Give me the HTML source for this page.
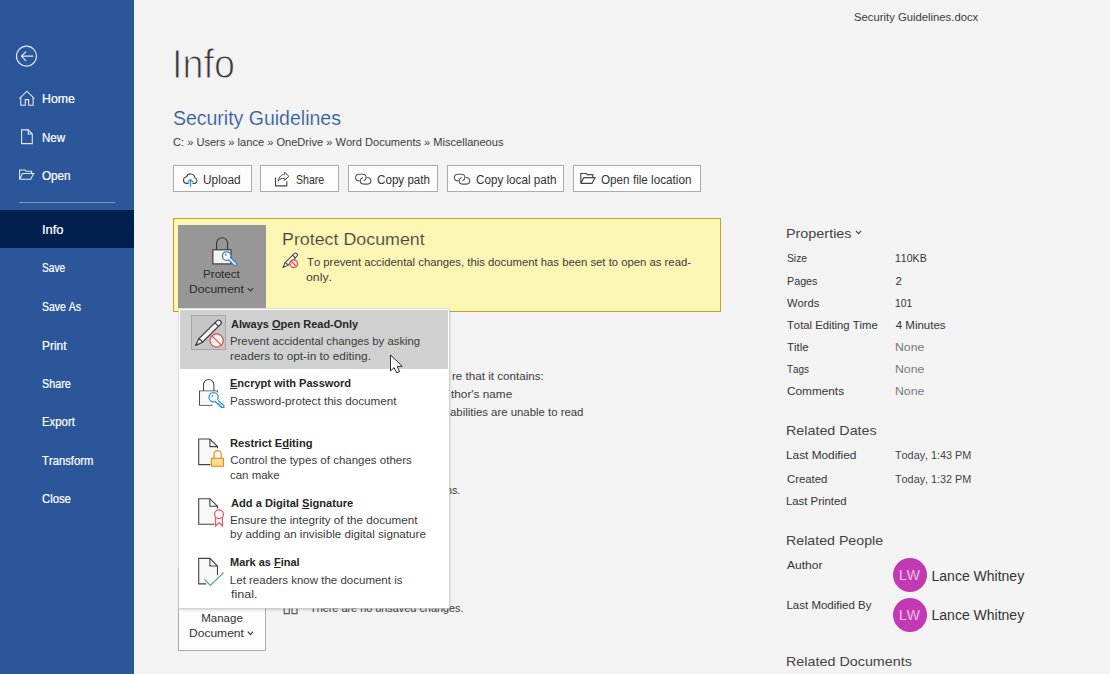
<!DOCTYPE html>
<html><head><meta charset="utf-8"><title>Info</title>
<style>
html,body{margin:0;padding:0;}
body{width:1110px;height:674px;overflow:hidden;background:#f3f3f3;position:relative;font-family:"Liberation Sans",sans-serif;}
.t{position:absolute;white-space:nowrap;transform-origin:0 0;font-kerning:none;}
.b{position:absolute;box-sizing:border-box;}
svg{position:absolute;overflow:visible;}
u{text-decoration:underline;text-underline-offset:1px;}
</style></head><body>
<div class="b" style="left:0px;top:0px;width:134.3px;height:674px;background:#2b579a;"></div>
<div class="b" style="left:0px;top:210px;width:134.3px;height:38px;background:#002050;"></div>
<div class="b" style="left:19px;top:202px;width:96px;height:1px;background:#7c97c4;"></div>
<span class="t" style="left:41.69px;top:89.00px;font-size:12px;line-height:20px;color:#ffffff;transform:scaleX(1.0265);-webkit-text-stroke:0.22px #fff;">Home</span>
<span class="t" style="left:41.75px;top:128.00px;font-size:12px;line-height:20px;color:#ffffff;transform:scaleX(0.9631);-webkit-text-stroke:0.22px #fff;">New</span>
<span class="t" style="left:42.15px;top:166.00px;font-size:12px;line-height:20px;color:#ffffff;transform:scaleX(0.9747);-webkit-text-stroke:0.22px #fff;">Open</span>
<span class="t" style="left:41.51px;top:220.00px;font-size:12px;line-height:20px;color:#ffffff;transform:scaleX(1.0758);-webkit-text-stroke:0.22px #fff;">Info</span>
<span class="t" style="left:42.24px;top:258.00px;font-size:12px;line-height:20px;color:#ffffff;transform:scaleX(0.8450);-webkit-text-stroke:0.22px #fff;">Save</span>
<span class="t" style="left:42.22px;top:297.00px;font-size:12px;line-height:20px;color:#ffffff;transform:scaleX(0.8739);-webkit-text-stroke:0.22px #fff;">Save As</span>
<span class="t" style="left:41.72px;top:336.00px;font-size:12px;line-height:20px;color:#ffffff;transform:scaleX(0.9915);-webkit-text-stroke:0.22px #fff;">Print</span>
<span class="t" style="left:42.21px;top:374.00px;font-size:12px;line-height:20px;color:#ffffff;transform:scaleX(0.8984);-webkit-text-stroke:0.22px #fff;">Share</span>
<span class="t" style="left:41.77px;top:412.00px;font-size:12px;line-height:20px;color:#ffffff;transform:scaleX(0.9462);-webkit-text-stroke:0.22px #fff;">Export</span>
<span class="t" style="left:42.45px;top:451.00px;font-size:12px;line-height:20px;color:#ffffff;transform:scaleX(0.9382);-webkit-text-stroke:0.22px #fff;">Transform</span>
<span class="t" style="left:42.13px;top:489.00px;font-size:12px;line-height:20px;color:#ffffff;transform:scaleX(0.9412);-webkit-text-stroke:0.22px #fff;">Close</span>
<span class="t" style="left:853.69px;top:7.00px;font-size:11px;line-height:20px;color:#3b3b3b;transform:scaleX(1.0262);">Security Guidelines.docx</span>
<span class="t" style="left:171.92px;top:36.00px;font-size:40px;line-height:56px;color:#383838;transform:scaleX(0.9422);-webkit-text-stroke:1.05px #f3f3f3;">Info</span>
<span class="t" style="left:172.91px;top:104.50px;font-size:19.5px;line-height:27px;color:#2b579a;-webkit-text-stroke:0.2px #f3f3f3;">Security Guidelines</span>
<span class="t" style="left:173.24px;top:132.00px;font-size:11px;line-height:20px;color:#3b3b3b;transform:scaleX(1.0066);">C: » Users » lance » OneDrive » Word Documents » Miscellaneous</span>
<div class="b" style="left:173px;top:165px;width:79px;height:27px;background:#fdfdfd;border:1px solid #ababab;"></div>
<div class="b" style="left:260px;top:165px;width:79px;height:27px;background:#fdfdfd;border:1px solid #ababab;"></div>
<div class="b" style="left:348px;top:165px;width:90px;height:27px;background:#fdfdfd;border:1px solid #ababab;"></div>
<div class="b" style="left:447px;top:165px;width:117px;height:27px;background:#fdfdfd;border:1px solid #ababab;"></div>
<div class="b" style="left:573px;top:165px;width:128px;height:27px;background:#fdfdfd;border:1px solid #ababab;"></div>
<span class="t" style="left:203.08px;top:170.00px;font-size:12px;line-height:20px;color:#333;transform:scaleX(0.9910);">Upload</span>
<span class="t" style="left:296.02px;top:170.00px;font-size:12px;line-height:20px;color:#333;transform:scaleX(0.8823);">Share</span>
<span class="t" style="left:376.71px;top:170.00px;font-size:12px;line-height:20px;color:#333;transform:scaleX(0.9697);">Copy path</span>
<span class="t" style="left:475.61px;top:170.00px;font-size:12px;line-height:20px;color:#333;transform:scaleX(0.9738);">Copy local path</span>
<span class="t" style="left:601.45px;top:170.00px;font-size:12px;line-height:20px;color:#333;transform:scaleX(0.9751);">Open file location</span>
<div class="b" style="left:173px;top:218px;width:548px;height:94px;background:#fbf6b4;border:1px solid #c5a021;"></div>
<div class="b" style="left:178px;top:225px;width:88px;height:82.6px;background:#979797;"></div>
<span class="t" style="left:203.45px;top:264.00px;font-size:11.5px;line-height:20px;color:#2b2b2b;transform:scaleX(1.0112);">Protect</span>
<span class="t" style="left:189.01px;top:279.00px;font-size:11.5px;line-height:20px;color:#2b2b2b;transform:scaleX(1.0470);">Document</span>
<span class="t" style="left:281.74px;top:228.00px;font-size:17px;line-height:23px;color:#444;transform:scaleX(1.0488);-webkit-text-stroke:0.15px #fbf6b4;">Protect Document</span>
<span class="t" style="left:306.55px;top:252.00px;font-size:11.5px;line-height:20px;color:#3b3b3b;transform:scaleX(0.9830);">To prevent accidental changes, this document has been set to open as read-</span>
<span class="t" style="left:306.28px;top:267.00px;font-size:11.5px;line-height:20px;color:#3b3b3b;transform:scaleX(1.0721);">only.</span>
<span class="t" style="left:452.23px;top:366.00px;font-size:11.5px;line-height:20px;color:#3b3b3b;transform:scaleX(1.0117);">re that it contains:</span>
<span class="t" style="left:451.32px;top:384.00px;font-size:11.5px;line-height:20px;color:#3b3b3b;transform:scaleX(1.0248);">thor&#x27;s name</span>
<span class="t" style="left:450.32px;top:402.00px;font-size:11.5px;line-height:20px;color:#3b3b3b;transform:scaleX(0.9890);">abilities are unable to read</span>
<span class="t" style="left:445.79px;top:480.00px;font-size:11.5px;line-height:20px;color:#3b3b3b;transform:scaleX(0.9315);">ns.</span>
<span class="t" style="left:309.66px;top:598.00px;font-size:11.5px;line-height:20px;color:#3b3b3b;transform:scaleX(0.9455);">There are no unsaved changes.</span>
<svg style="left:0;top:0" width="1110" height="674" viewBox="0 0 1110 674" fill="none"><path d="M284.2 604V613.6H289.3V604M292 604V613.6H297V604" stroke="#555" stroke-width="1.1" stroke-linejoin="miter" stroke-linecap="butt"/></svg>
<div class="b" style="left:178px;top:568px;width:88px;height:83px;background:#fdfdfd;border:1px solid #ababab;"></div>
<span class="t" style="left:-0.94px;top:608.00px;font-size:11.5px;line-height:20px;color:#333;left:178px;width:88px;text-align:center;">Manage</span>
<span class="t" style="left:189.01px;top:623.00px;font-size:11.5px;line-height:20px;color:#333;transform:scaleX(1.0470);">Document</span>
<span class="t" style="left:786.22px;top:223.50px;font-size:13.5px;line-height:20px;color:#444;transform:scaleX(1.0645);">Properties</span>
<span class="t" style="left:786.93px;top:248.00px;font-size:11.5px;line-height:20px;color:#333;transform:scaleX(0.8951);">Size</span>
<span class="t" style="left:895.20px;top:248.00px;font-size:11.5px;line-height:20px;color:#333;transform:scaleX(0.9169);">110KB</span>
<span class="t" style="left:786.52px;top:271.00px;font-size:11.5px;line-height:20px;color:#333;transform:scaleX(0.9344);">Pages</span>
<span class="t" style="left:895.42px;top:271.00px;font-size:11.5px;line-height:20px;color:#333;">2</span>
<span class="t" style="left:787.35px;top:293.00px;font-size:11.5px;line-height:20px;color:#333;transform:scaleX(0.9738);">Words</span>
<span class="t" style="left:895.21px;top:293.00px;font-size:11.5px;line-height:20px;color:#333;transform:scaleX(0.9014);">101</span>
<span class="t" style="left:787.15px;top:315.00px;font-size:11.5px;line-height:20px;color:#333;transform:scaleX(0.9782);">Total Editing Time</span>
<span class="t" style="left:895.74px;top:315.00px;font-size:11.5px;line-height:20px;color:#333;">4 Minutes</span>
<span class="t" style="left:787.14px;top:337.00px;font-size:11.5px;line-height:20px;color:#333;transform:scaleX(0.9973);">Title</span>
<span class="t" style="left:894.99px;top:337.00px;font-size:11.5px;line-height:20px;color:#7a7a7a;transform:scaleX(1.0677);">None</span>
<span class="t" style="left:787.18px;top:359.00px;font-size:11.5px;line-height:20px;color:#333;transform:scaleX(0.8597);">Tags</span>
<span class="t" style="left:894.99px;top:359.00px;font-size:11.5px;line-height:20px;color:#7a7a7a;transform:scaleX(1.0677);">None</span>
<span class="t" style="left:786.80px;top:381.00px;font-size:11.5px;line-height:20px;color:#333;transform:scaleX(1.0257);">Comments</span>
<span class="t" style="left:894.99px;top:381.00px;font-size:11.5px;line-height:20px;color:#7a7a7a;transform:scaleX(1.0677);">None</span>
<span class="t" style="left:786.23px;top:420.50px;font-size:13.5px;line-height:20px;color:#444;transform:scaleX(1.0601);">Related Dates</span>
<span class="t" style="left:786.43px;top:445.00px;font-size:11.5px;line-height:20px;color:#333;transform:scaleX(1.0283);">Last Modified</span>
<span class="t" style="left:895.06px;top:445.00px;font-size:11.5px;line-height:20px;color:#444;transform:scaleX(0.9403);">Today, 1:43 PM</span>
<span class="t" style="left:786.83px;top:469.00px;font-size:11.5px;line-height:20px;color:#333;transform:scaleX(0.9826);">Created</span>
<span class="t" style="left:895.06px;top:469.00px;font-size:11.5px;line-height:20px;color:#444;transform:scaleX(0.9403);">Today, 1:32 PM</span>
<span class="t" style="left:786.47px;top:491.00px;font-size:11.5px;line-height:20px;color:#333;transform:scaleX(0.9869);">Last Printed</span>
<span class="t" style="left:786.24px;top:530.50px;font-size:13.5px;line-height:20px;color:#444;transform:scaleX(1.0518);">Related People</span>
<span class="t" style="left:787.38px;top:555.00px;font-size:11.5px;line-height:20px;color:#333;transform:scaleX(1.0455);">Author</span>
<span class="t" style="left:786.46px;top:595.00px;font-size:11.5px;line-height:20px;color:#333;">Last Modified By</span>
<div class="b" style="left:893px;top:557.5999999999999px;width:34.2px;height:34.2px;background:#c239b3;border-radius:50%;"></div>
<span class="t" style="left:898.76px;top:564.00px;font-size:15.5px;line-height:21px;color:#fff;transform:scaleX(0.8985);-webkit-text-stroke:0.4px #c239b3;">LW</span>
<span class="t" style="left:931.55px;top:566.00px;font-size:14px;line-height:20px;color:#333;">Lance Whitney</span>
<div class="b" style="left:893px;top:598.0px;width:34.2px;height:34.2px;background:#c239b3;border-radius:50%;"></div>
<span class="t" style="left:898.76px;top:604.00px;font-size:15.5px;line-height:21px;color:#fff;transform:scaleX(0.8985);-webkit-text-stroke:0.4px #c239b3;">LW</span>
<span class="t" style="left:931.55px;top:605.00px;font-size:14px;line-height:20px;color:#333;">Lance Whitney</span>
<span class="t" style="left:786.22px;top:651.50px;font-size:13.5px;line-height:20px;color:#444;transform:scaleX(1.0619);">Related Documents</span>
<div class="b" style="left:179px;top:308.5px;width:270.2px;height:299.8px;background:#ffffff;box-shadow:0 0 0 0.6px #cfcfcf, 1px 1.5px 2.5px rgba(0,0,0,0.17);"></div>
<div class="b" style="left:180px;top:309.8px;width:267.8px;height:58.8px;background:#d0d0d0;"></div>
<div class="b" style="left:191px;top:315px;width:35px;height:34.8px;background:#c6c6c6;border:1px solid #a6a6a6;"></div>
<span class="t" style="left:230.53px;top:314.00px;font-size:11.5px;line-height:20px;color:#262626;font-weight:bold;transform:scaleX(0.9572);">Always <u>O</u>pen Read-Only</span>
<span class="t" style="left:229.87px;top:331.00px;font-size:11.5px;line-height:20px;color:#3b3b3b;transform:scaleX(0.9850);">Prevent accidental changes by asking</span>
<span class="t" style="left:230.01px;top:346.00px;font-size:11.5px;line-height:20px;color:#3b3b3b;transform:scaleX(1.0304);">readers to opt-in to editing.</span>
<span class="t" style="left:230.06px;top:373.00px;font-size:11.5px;line-height:20px;color:#262626;font-weight:bold;transform:scaleX(0.9568);"><u>E</u>ncrypt with Password</span>
<span class="t" style="left:229.84px;top:391.00px;font-size:11.5px;line-height:20px;color:#3b3b3b;transform:scaleX(1.0132);">Password-protect this document</span>
<span class="t" style="left:230.05px;top:433.00px;font-size:11.5px;line-height:20px;color:#262626;font-weight:bold;transform:scaleX(0.9719);">Restrict E<u>d</u>iting</span>
<span class="t" style="left:230.22px;top:450.00px;font-size:11.5px;line-height:20px;color:#3b3b3b;">Control the types of changes others</span>
<span class="t" style="left:230.31px;top:465.00px;font-size:11.5px;line-height:20px;color:#3b3b3b;transform:scaleX(0.9968);">can make</span>
<span class="t" style="left:230.52px;top:493.00px;font-size:11.5px;line-height:20px;color:#262626;font-weight:bold;transform:scaleX(0.9664);">Add a Digital <u>S</u>ignature</span>
<span class="t" style="left:229.84px;top:510.00px;font-size:11.5px;line-height:20px;color:#3b3b3b;transform:scaleX(1.0151);">Ensure the integrity of the document</span>
<span class="t" style="left:230.05px;top:524.00px;font-size:11.5px;line-height:20px;color:#3b3b3b;transform:scaleX(1.0111);">by adding an invisible digital signature</span>
<span class="t" style="left:230.07px;top:552.00px;font-size:11.5px;line-height:20px;color:#262626;font-weight:bold;transform:scaleX(0.9554);">Mark as <u>F</u>inal</span>
<span class="t" style="left:229.86px;top:570.00px;font-size:11.5px;line-height:20px;color:#3b3b3b;">Let readers know the document is</span>
<span class="t" style="left:230.62px;top:584.00px;font-size:11.5px;line-height:20px;color:#3b3b3b;transform:scaleX(1.0876);">final.</span>
<svg style="left:0;top:0;" width="1110" height="674" viewBox="0 0 1110 674" fill="none" stroke-linecap="round" stroke-linejoin="round">
<g stroke="#e3e8f2" stroke-width="1.2">
<circle cx="26.5" cy="56.2" r="10"/>
<path d="M32.8 56.2H21.5M25.8 51.8L21.4 56.2L25.8 60.6"/>
</g>
<g stroke="#e3e8f2" stroke-width="1.1" stroke-linejoin="miter" stroke-linecap="butt">
<path d="M19.4 98.6L26.9 91.2L34.4 98.6M20.8 97.4V105.3H25.3V99.6H28.6V105.3H33.1V97.4"/>
<path d="M28.2 129.9H21.6V143.6H32.3V134L28.2 129.9V134H32.3"/>
<path d="M31.6 173.4V171.2H26L25 170H19.6V179.3L22.6 173.5H33.7L30.7 179.3H19.6"/>
</g>
</svg>
<svg style="left:0;top:0;" width="1110" height="674" viewBox="0 0 1110 674" fill="none" stroke-linecap="round" stroke-linejoin="round">
<g stroke="#444" stroke-width="1.1">
<path d="M188.2 183.4H186.2A3.4 3.4 0 0 1 186.5 176.7A4.3 4.3 0 0 1 194.8 177.8A2.9 2.9 0 0 1 194.9 183.4H193"/>
<path d="M190.5 186.3V179.6M188.2 181.8L190.5 179.4L192.8 181.8" stroke="#2a9fe0" stroke-width="1.3"/>
<path d="M275.5 177.4V185.9H286.8V181.2" stroke-linejoin="miter" stroke-linecap="butt"/>
<path d="M278.2 180.8C279 176.6 281.6 174.5 284.7 174.3V172.3L288.9 176.3L284.7 180.3V178.3C282 178.2 279.8 178.9 278.2 180.8Z" stroke-width="1"/>
</g>
<g stroke="#555" stroke-width="1.1"><path d="M359.20000000000005 180.9H358.90000000000003A3.3 3.3 0 0 1 358.90000000000003 174.3H362.8A3.3 3.3 0 0 1 366.1 177.60000000000002A3.3 3.3 0 0 1 363.8 180.70000000000002"/><path d="M367.20000000000005 177.5H367.6A3.3 3.3 0 0 1 367.6 184.10000000000002H363.6A3.3 3.3 0 0 1 360.3 180.8A3.3 3.3 0 0 1 362.6 177.70000000000002"/></g><g stroke="#555" stroke-width="1.1"><path d="M458.0 180.9H457.7A3.3 3.3 0 0 1 457.7 174.3H461.59999999999997A3.3 3.3 0 0 1 464.9 177.60000000000002A3.3 3.3 0 0 1 462.59999999999997 180.70000000000002"/><path d="M466.0 177.5H466.4A3.3 3.3 0 0 1 466.4 184.10000000000002H462.4A3.3 3.3 0 0 1 459.09999999999997 180.8A3.3 3.3 0 0 1 461.4 177.70000000000002"/></g><g stroke="#444" stroke-width="1.15" stroke-linejoin="miter" stroke-linecap="butt"><path d="M592.6999999999999 177.4V174.6H587.4L586.4 173.5H580.8V183.4L583.8 177.6H595.0L592.0 183.4H580.8"/></g></svg>
<svg style="left:0;top:0;" width="1110" height="674" viewBox="0 0 1110 674" fill="none" stroke-linecap="round" stroke-linejoin="round"><rect x="212.9" y="249.8" width="18.1" height="14.1" fill="#f4f4f4" stroke="#3a3a3a" stroke-width="1.15" stroke-linejoin="miter"/><path d="M216.6 249.8V243.2A5.5 5.5 0 0 1 227.6 243.2V249.8" stroke="#3a3a3a" stroke-width="1.15" stroke-linecap="butt"/><path d="M226.7 256.1L235.4 264.3" stroke="#3d7bcd" stroke-width="4.28" stroke-linecap="round"/><circle cx="226.7" cy="256.1" r="4.3" fill="#fbfcfe" stroke="#3d7bcd" stroke-width="1.3"/><path d="M228.85 258.035L235.4 264.3" stroke="#fbfcfe" stroke-width="1.7" stroke-linecap="round"/><circle cx="225.79999999999998" cy="254.90000000000003" r="0.85" fill="#3d7bcd" stroke="none"/><path d="M247.8 288.1L250.4 291.0L253.0 288.1" stroke="#333" stroke-width="1.1" stroke-linejoin="miter" stroke-linecap="butt"/><path d="M855.9 230.8L858.5 233.70000000000002L861.1 230.8" stroke="#444" stroke-width="1.1" stroke-linejoin="miter" stroke-linecap="butt"/><g transform="translate(282.9 267.5) rotate(-44.7)" stroke="#444" stroke-width="1.0" stroke-linejoin="round"><path d="M0 0L4.9399999999999995 -1.9H17.700000000000003A1.9 1.9 0 0 1 17.700000000000003 1.9H4.9399999999999995Z" fill="#f4f4f4"/><path d="M4.9399999999999995 -1.9Q6.27 0 4.9399999999999995 1.9M15.610000000000003 -1.9V1.9"/><path d="M0 0L1.8771999999999998 -0.722V0.722Z" fill="#444" stroke="none"/></g><circle cx="293.7" cy="263.7" r="3.8" fill="#fbf3ee" stroke="#ea4a45" stroke-width="1.3"/><path d="M291.01302 261.01302L296.38698 266.38698" stroke="#ea4a45" stroke-width="1.3"/></svg>
<svg style="left:0;top:0;" width="1110" height="674" viewBox="0 0 1110 674" fill="none" stroke-linecap="round" stroke-linejoin="round"><g transform="translate(195.6 345.5) rotate(-44.7)" stroke="#333" stroke-width="1.1" stroke-linejoin="round"><path d="M0 0L6.8 -2.5H32.5A2.5 2.5 0 0 1 32.5 2.5H6.8Z" fill="#f3f3f3"/><path d="M6.8 -2.5Q8.55 0 6.8 2.5M29.75 -2.5V2.5"/><path d="M0 0L2.584 -0.95V0.95Z" fill="#333" stroke="none"/></g><circle cx="216.6" cy="340.5" r="6.6" fill="#f5f5f5" stroke="#d84f4b" stroke-width="1.25"/><path d="M211.93313999999998 335.83314L221.26686 345.16686" stroke="#d84f4b" stroke-width="1.25"/><path d="M212.5 405.3H199.6V390.9H217.3V392.6" fill="none" stroke="#444" stroke-width="1.05" stroke-linejoin="miter" stroke-linecap="butt"/><path d="M200.1 391.4H216.8V397H211V404.8H200.1Z" fill="#f8f8f8" stroke="none"/><path d="M203.5 390.9V384.8A5.2 5.2 0 0 1 213.9 384.8V390.9" stroke="#444" stroke-width="1.05" stroke-linecap="butt"/><path d="M216.6 399.2L223.9 405.6V407.4H221.2V406.2H219.9V404.9H218.6V403.6H217.2L215.6 401.8Z" fill="#fcfdff" stroke="#2b8fdc" stroke-width="1.15" stroke-linejoin="miter"/><circle cx="213.6" cy="397.2" r="4.6" fill="#fcfdff" stroke="#2b8fdc" stroke-width="1.25"/><path d="M216.3 400L217.6 401.3" stroke="#fcfdff" stroke-width="2.2" stroke-linecap="butt"/><circle cx="212.4" cy="395.9" r="0.85" fill="#2b8fdc" stroke="none"/><path d="M198.7 439H209.9L217.5 446.6V464.6H198.7Z" fill="#f8f8f8" stroke="none"/><g stroke="#444" stroke-width="1.1" stroke-linejoin="miter" stroke-linecap="butt"><path d="M210.5 464.6H198.7V439H209.9L217.5 446.6V448.2"/><path d="M209.9 439V446.6H217.5"/></g><rect x="211.5" y="458.3" width="12" height="8" fill="#fbdf8e" stroke="#ee8b25" stroke-width="1.15" stroke-linejoin="miter"/><path d="M214 458.3V454.2A3.6 3.6 0 0 1 221.2 454.2V458.3" stroke="#ee8b25" stroke-width="1.2" stroke-linecap="butt"/><path d="M198.7 498.7H209.9L217.5 506.3V524.2H198.7Z" fill="#f8f8f8" stroke="none"/><g stroke="#444" stroke-width="1.1" stroke-linejoin="miter" stroke-linecap="butt"><path d="M214.5 524.2H198.7V498.7H209.9L217.5 506.3V508.5"/><path d="M209.9 498.7V506.3H217.5"/></g><path d="M215.6 517.5V526L219 522.6L222.4 526V517.5" stroke="#ee4f59" stroke-width="1.15" stroke-linejoin="miter" fill="#fdfdfd"/><circle cx="219" cy="514.2" r="4.4" fill="#fdfdfd" stroke="#ee4f59" stroke-width="1.25"/><path d="M198.7 558.4H209.9L217.5 566.0V583.9H198.7Z" fill="#f8f8f8" stroke="none"/><g stroke="#444" stroke-width="1.1" stroke-linejoin="miter" stroke-linecap="butt"><path d="M206.2 583.9H198.7V558.4H209.9L217.5 566.0V575.2"/><path d="M209.9 558.4V566.0H217.5"/></g><path d="M204.3 579.4L210.4 585.4L223.7 572.6" stroke="#4db36a" stroke-width="1.25" stroke-linejoin="miter" stroke-linecap="butt"/><path d="M390.5 355.4V370.9L394.1 367.7L396.7 372.9L399.6 371.5L397.2 366.5L401.8 366.3Z" fill="#fff" stroke="#222" stroke-width="0.95" stroke-linejoin="miter"/></svg>
<svg style="left:0;top:0;" width="1110" height="674" viewBox="0 0 1110 674" fill="none" stroke-linecap="round" stroke-linejoin="round"><path d="M247.8 631.7L250.4 634.6L253.0 631.7" stroke="#333" stroke-width="1.1" stroke-linejoin="miter" stroke-linecap="butt"/></svg>
</body></html>
